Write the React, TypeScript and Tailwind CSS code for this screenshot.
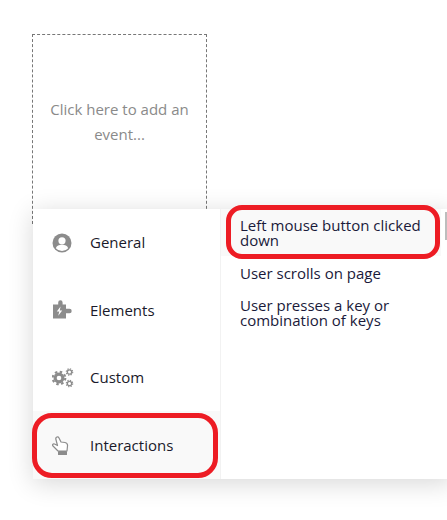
import React from "react";

const Row = ({ icon, label, heightClass, active }: { icon: React.ReactNode; label: string; heightClass: string; active?: boolean }) => (
  <div className={`${heightClass} flex items-center pl-[19px] ${active ? "bg-[#f9f9f9]" : ""}`}>
    <div className="w-[38px] flex justify-start">{icon}</div>
    <span className="text-[15px] text-[#1a1a2a]">{label}</span>
  </div>
);

const User = () => (
  <svg width="20" height="20" viewBox="0 0 20 20">
    <circle cx="10" cy="10" r="9.5" fill="#8c8c8c" />
    <circle cx="10" cy="7.8" r="3.6" fill="#fff" />
    <path d="M3.8 15.2c1-2.6 3-3.500 6.200-3.500s5.200.9 6.200 3.500A8.200 8.200 0 0 1 10 18a8.200 8.200 0 0 1-6.200-2.800z" fill="#fff" />
  </svg>
);

const Puzzle = () => (
  <svg width="21" height="20" viewBox="0 0 21 20">
    <path d="M1 4.500h5.200V2.400a2.200 2.200 0 0 1 4.400 0v2.100H14v4.300h3.500a2.200 2.200 0 0 1 0 4.400H14V18.500H1z" fill="#8c8c8c" />
    <path d="M8.600 6.500 4.800 11.600h2.500L6.200 15.800l4-5.400H7.700z" fill="#fff" />
  </svg>
);

const Gear = ({ x, y, r, hole }: { x: number; y: number; r: number; hole: number }) => (
  <g transform={`translate(${x} ${y})`}>
    <circle r={r * 0.78} fill="#8c8c8c" />
    <circle r={r * 0.9} fill="none" stroke="#8c8c8c" strokeWidth={r * 0.3} strokeDasharray={`${r * 0.354} ${r * 0.353}`} />
    <circle r={hole} fill="#fff" />
  </g>
);

const Gears = () => (
  <svg width="22" height="20" viewBox="0 0 22 20">
    <Gear x={7} y={10} r={7} hole={2.300} />
    <Gear x={17.500} y={4} r={3.600} hole={1.500} />
    <Gear x={17.500} y={15.500} r={3.600} hole={1.500} />
  </svg>
);

const Hand = () => (
  <svg width="18" height="21" viewBox="0 0 18 21">
    <path
      d="M6 16 1 11C0 10 1 8.500 2.500 9L5.500 10.500 3.800 4C3.500 2 6 1 7 3L9 7 13 7.500C15 8 15.800 9 15.500 11L15 16Z"
      fill="#fff"
      stroke="#8c8c8c"
      strokeWidth="1.200"
      strokeLinejoin="round"
    />
    <rect x="6" y="16" width="9" height="4" rx="0.600" fill="#8c8c8c" />
  </svg>
);

export default function App() {
  return (
    <div className="relative w-[447px] h-[520px] bg-white overflow-hidden font-['Open_Sans',sans-serif]">
      <div className="pt-[34px] pl-[32px]">
        <div className="w-[175px] h-[190px] border border-dashed border-[#777] flex items-center justify-center text-center px-[12px]">
          <p className="text-[15px] leading-[25px] text-[#8a8a8a] -mt-[15px]">Click here to add an event...</p>
        </div>
      </div>

      <div className="absolute left-[33px] top-[209px] w-[420px] h-[270px] bg-white flex shadow-[0_4px_24px_rgba(0,0,0,0.16)]">
        <div className="w-[188px] border-r border-[#f2f2f2] shrink-0">
          <Row icon={<User />} label="General" heightClass="h-[67px]" />
          <Row icon={<Puzzle />} label="Elements" heightClass="h-[68px]" />
          <Row icon={<Gears />} label="Custom" heightClass="h-[67px]" />
          <Row icon={<Hand />} label="Interactions" heightClass="h-[68px]" active />
        </div>
        <div className="flex-1 text-[15px] leading-[15px] text-[#1a1a3a]">
          <div className="h-[47px] w-[220px] bg-[#f9f9f9] pl-[19px] pt-[9px] pr-[15px]">Left mouse button clicked down</div>
          <div className="pl-[19px] pt-[10px]">User scrolls on page</div>
          <div className="pl-[19px] pt-[17px] w-[205px]">User presses a key or combination of keys</div>
        </div>
      </div>

      <div className="absolute left-[445px] top-[212px] w-[2px] h-[28px] bg-[#bdbdbd]" />
      <div className="absolute left-[32px] top-[413px] w-[186px] h-[65px] border-[5px] border-[#ed1c24] rounded-[20px]" />
      <div className="absolute left-[226px] top-[205px] w-[214px] h-[54px] border-[5px] border-[#ed1c24] rounded-[16px]" />
    </div>
  );
}
